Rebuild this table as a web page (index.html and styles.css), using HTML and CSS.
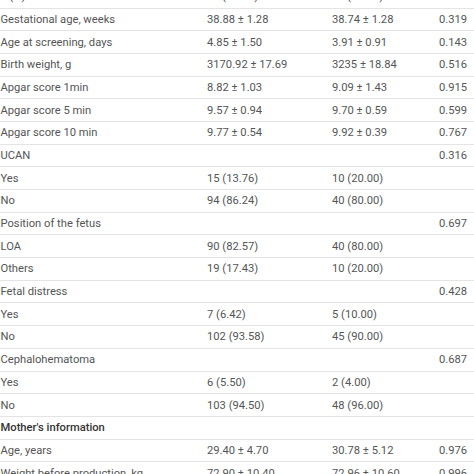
FILE: index.html
```html
<!DOCTYPE html>
<html>
<head>
<meta charset="utf-8">
<link rel="stylesheet" href="styles.css">
</head>
<body>
<div class="table">
  <div class="row"><span>n (%)</span><span>54 (49.54)</span><span>25 (50.00)</span><span class="p">0.955</span></div>
  <div class="row"><span>Gestational age, weeks</span><span>38.88 ± 1.28</span><span>38.74 ± 1.28</span><span class="p">0.319</span></div>
  <div class="row"><span>Age at screening, days</span><span>4.85 ± 1.50</span><span>3.91 ± 0.91</span><span class="p">0.143</span></div>
  <div class="row"><span>Birth weight, g</span><span>3170.92 ± 17.69</span><span>3235 ± 18.84</span><span class="p">0.516</span></div>
  <div class="row"><span>Apgar score 1min</span><span>8.82 ± 1.03</span><span>9.09 ± 1.43</span><span class="p">0.915</span></div>
  <div class="row"><span>Apgar score 5 min</span><span>9.57 ± 0.94</span><span>9.70 ± 0.59</span><span class="p">0.599</span></div>
  <div class="row"><span>Apgar score 10 min</span><span>9.77 ± 0.54</span><span>9.92 ± 0.39</span><span class="p">0.767</span></div>
  <div class="row"><span>UCAN</span><span></span><span></span><span class="p">0.316</span></div>
  <div class="row"><span>Yes</span><span>15 (13.76)</span><span>10 (20.00)</span><span class="p"></span></div>
  <div class="row"><span>No</span><span>94 (86.24)</span><span>40 (80.00)</span><span class="p"></span></div>
  <div class="row"><span>Position of the fetus</span><span></span><span></span><span class="p">0.697</span></div>
  <div class="row"><span>LOA</span><span>90 (82.57)</span><span>40 (80.00)</span><span class="p"></span></div>
  <div class="row"><span>Others</span><span>19 (17.43)</span><span>10 (20.00)</span><span class="p"></span></div>
  <div class="row"><span>Fetal distress</span><span></span><span></span><span class="p">0.428</span></div>
  <div class="row"><span>Yes</span><span>7 (6.42)</span><span>5 (10.00)</span><span class="p"></span></div>
  <div class="row"><span>No</span><span>102 (93.58)</span><span>45 (90.00)</span><span class="p"></span></div>
  <div class="row"><span>Cephalohematoma</span><span></span><span></span><span class="p">0.687</span></div>
  <div class="row"><span>Yes</span><span>6 (5.50)</span><span>2 (4.00)</span><span class="p"></span></div>
  <div class="row"><span>No</span><span>103 (94.50)</span><span>48 (96.00)</span><span class="p"></span></div>
  <div class="row head"><span>Mother's information</span><span></span><span></span><span class="p"></span></div>
  <div class="row"><span>Age, years</span><span>29.40 ± 4.70</span><span>30.78 ± 5.12</span><span class="p">0.976</span></div>
  <div class="row"><span>Weight before production, kg</span><span>72.90 ± 10.40</span><span>72.96 ± 10.60</span><span class="p">0.996</span></div>
</div>
</body>
</html>
```
FILE: styles.css
```css
html, body {
  margin: 0;
  padding: 0;
  background: #ffffff;
  overflow: hidden;
}
body {
  font-family: Roboto, "Liberation Sans", sans-serif;
  font-size: 11.2px;
  color: #555555;
}
.table {
  margin-top: -14.2px;
  width: 474px;
}
.row {
  display: grid;
  grid-template-columns: 207px 125px 1fr 60px;
  align-items: center;
  height: 22.7px;
  box-sizing: border-box;
  border-bottom: 1.5px solid #e4e4e4;
  padding-right: 7px;
  white-space: nowrap;
}
.row span:first-child {
  padding-left: 0.5px;
}
.p {
  text-align: right;
}
.head {
  font-weight: 500;
  color: #333333;
}
```
